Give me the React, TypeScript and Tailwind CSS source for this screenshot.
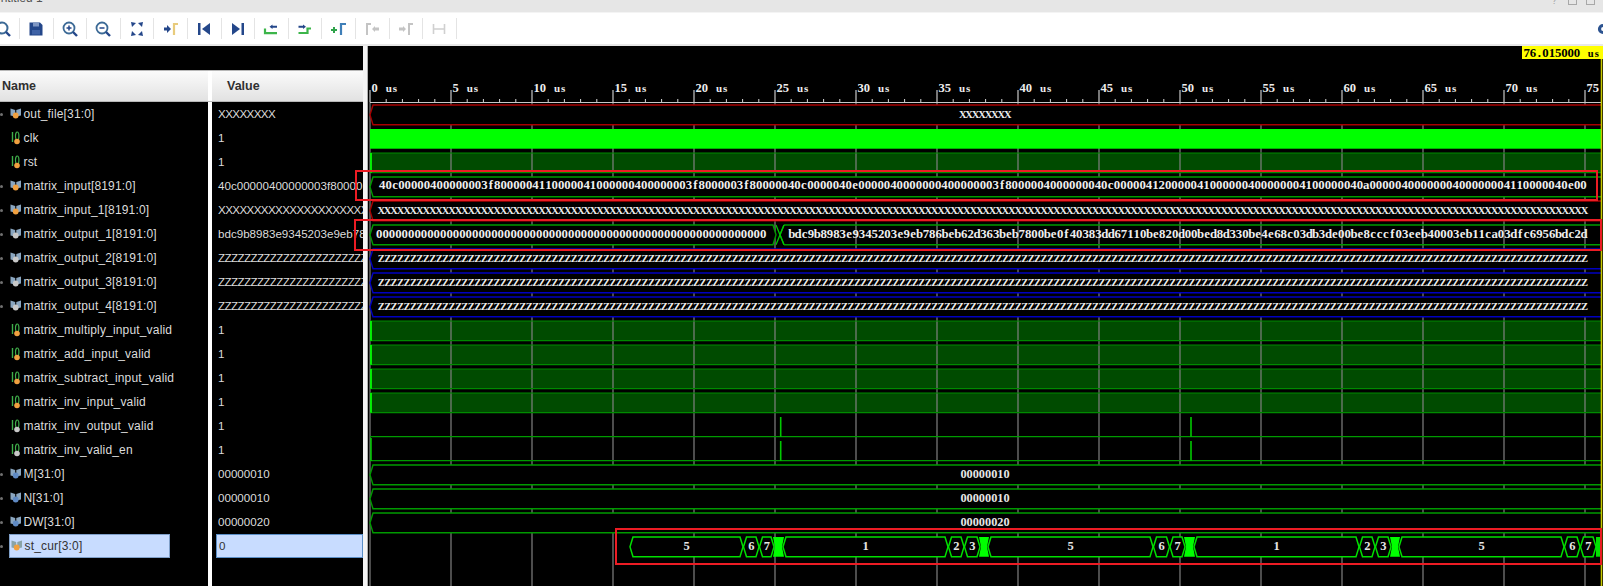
import React from "react";

const NAVY = "#24478a";
const STEEL = "#3c6a96";

function Ic({ children }: { children: React.ReactNode }) {
  return (
    <svg width="20" height="20" viewBox="0 0 20 20" fill="none">
      {children}
    </svg>
  );
}

const toolbarIcons: React.ReactNode[] = [
  <Ic><circle cx="9" cy="9" r="5.5" stroke={STEEL} strokeWidth="2" /><path d="M13 13l4 4" stroke={NAVY} strokeWidth="2.4" /></Ic>,
  <Ic><path d="M3.5 3.5h10.500l2.500 2.500v10.500H3.500z" fill={NAVY} /><rect x="7" y="3.500" width="6" height="4" fill="#7f97c4" /><rect x="6" y="11" width="8" height="4.500" fill="#3f62a6" /></Ic>,
  <Ic><circle cx="9" cy="9" r="5.500" stroke={STEEL} strokeWidth="1.800" /><path d="M6.500 9h5M9 6.500v5" stroke={NAVY} strokeWidth="1.500" /><path d="M13 13l4 4" stroke={NAVY} strokeWidth="2.400" /></Ic>,
  <Ic><circle cx="9" cy="9" r="5.500" stroke={STEEL} strokeWidth="1.800" /><path d="M6.500 9h5" stroke={NAVY} strokeWidth="1.500" /><path d="M13 13l4 4" stroke={NAVY} strokeWidth="2.400" /></Ic>,
  <Ic><path d="M4 3l5 1-4 4zM16 3l-5 1 4 4zM4 17l5-1-4-4zM16 17l-5-1 4-4z" fill={NAVY} /></Ic>,
  <Ic><path d="M3 8.500h3V6l4 4-4 4v-2.500H3z" fill={NAVY} /><path d="M13 16V5h4" stroke="#e8cb7c" strokeWidth="2.200" /></Ic>,
  <Ic><rect x="4" y="4" width="2.500" height="12" fill={NAVY} /><path d="M16 4v12L8 10z" fill={NAVY} /></Ic>,
  <Ic><rect x="13.500" y="4" width="2.500" height="12" fill={NAVY} /><path d="M4 4v12l8-6z" fill={NAVY} /></Ic>,
  <Ic><path d="M4 9.500v4.700h12" stroke="#3cb54a" strokeWidth="2.200" /><path d="M8.500 7.700 11.500 5.500v1.300H16v2h-4.500V10z" fill={NAVY} /></Ic>,
  <Ic><path d="M3.500 14h9V9.500H16" stroke="#3cb54a" strokeWidth="2.200" /><path d="M11 7.700 8 5.500v1.300H3.500v2H8V10z" fill={NAVY} /></Ic>,
  <Ic><path d="M2 11h6M5 8v6" stroke="#2ea34a" strokeWidth="2" /><path d="M12 16V5h5" stroke="#3f7fb8" strokeWidth="2.200" /></Ic>,
  <Ic><path d="M5 16V5h4" stroke="#c4c4c4" strokeWidth="2" /><path d="M17 8.500h-4V7l-3 3 3 3v-1.500h4z" fill="#c4c4c4" /></Ic>,
  <Ic><path d="M3 8.500h4V7l3 3-3 3v-1.500H3z" fill="#c4c4c4" /><path d="M13 16V5h4" stroke="#c4c4c4" strokeWidth="2" /></Ic>,
  <Ic><path d="M4.500 5v10M15.500 5v10M5 10h10" stroke="#d0d0d0" strokeWidth="1.600" /></Ic>,
];

const ORANGE = "#f0a040";
const GRAY = "#c8c8c8";

function BusIcon({ dot, body = "#8aa6c0" }: { dot: string; body?: string }) {
  return (
    <svg width="12" height="14" viewBox="0 0 12 14" className="shrink-0">
      <path d="M0.500 1.500 5.200 3v6.500L0.500 8.500zM11 1.500 6.300 3v6.500L11 8.500z" fill={body} />
      <circle cx="5.700" cy="8.500" r="2.900" fill={dot} />
    </svg>
  );
}

function BitIcon({ dot }: { dot: string }) {
  return (
    <svg width="12" height="16" viewBox="0 0 12 16" className="shrink-0">
      <path d="M2.500 2v10" stroke="#3fae4a" strokeWidth="1.400" />
      <ellipse cx="7.200" cy="6" rx="1.700" ry="4" stroke="#3fae4a" strokeWidth="1.200" fill="none" />
      <circle cx="7" cy="11.500" r="2.800" fill={dot} />
    </svg>
  );
}

type Row = {
  name: string;
  value: string;
  bus: boolean;
  dot: string;
  body?: string;
  squeeze?: boolean;
  selected?: boolean;
};

const X21 = "X".repeat(21);
const Z23 = "Z".repeat(23);
const BLUE = "#5f8ac4";

const rows: Row[] = [
  { name: "out_file[31:0]", value: "XXXXXXXX", bus: true, dot: ORANGE, squeeze: true },
  { name: "clk", value: "1", bus: false, dot: ORANGE },
  { name: "rst", value: "1", bus: false, dot: ORANGE },
  { name: "matrix_input[8191:0]", value: "40c00000400000003f80000", bus: true, dot: ORANGE },
  { name: "matrix_input_1[8191:0]", value: X21, bus: true, dot: ORANGE, squeeze: true },
  { name: "matrix_output_1[8191:0]", value: "bdc9b8983e9345203e9eb78", bus: true, dot: GRAY },
  { name: "matrix_output_2[8191:0]", value: Z23, bus: true, dot: GRAY, squeeze: true },
  { name: "matrix_output_3[8191:0]", value: Z23, bus: true, dot: GRAY, squeeze: true },
  { name: "matrix_output_4[8191:0]", value: Z23, bus: true, dot: GRAY, squeeze: true },
  { name: "matrix_multiply_input_valid", value: "1", bus: false, dot: ORANGE },
  { name: "matrix_add_input_valid", value: "1", bus: false, dot: ORANGE },
  { name: "matrix_subtract_input_valid", value: "1", bus: false, dot: ORANGE },
  { name: "matrix_inv_input_valid", value: "1", bus: false, dot: ORANGE },
  { name: "matrix_inv_output_valid", value: "1", bus: false, dot: GRAY },
  { name: "matrix_inv_valid_en", value: "1", bus: false, dot: GRAY },
  { name: "M[31:0]", value: "00000010", bus: true, dot: BLUE },
  { name: "N[31:0]", value: "00000010", bus: true, dot: BLUE },
  { name: "DW[31:0]", value: "00000020", bus: true, dot: BLUE },
  { name: "st_cur[3:0]", value: "0", bus: true, dot: ORANGE, selected: true },
];

/* ---------- waveform drawing (page coordinates through the viewBox) ---------- */
const tx = (t: number) => 370 + 16.2 * t;
const top = (i: number) => 105 + 24 * i;
const bot = (i: number) => 124.7 + 24 * i;
const mid = (i: number) => 114.85 + 24 * i;
const END = 1601;
const SERIF = "'Liberation Serif', serif";

const glyphWidth: Record<string, number> = {
  a: 0.5,
  b: 0.556,
  c: 0.444,
  d: 0.556,
  e: 0.444,
  f: 0.333,
  u: 0.556,
  s: 0.389,
  X: 0.722,
  Z: 0.667,
  ".": 0.25,
};

function Mono({
  s,
  x,
  y,
  pitch = 6.39,
  size = 12.8,
  fill = "#eeeeee",
}: {
  s: string;
  x: number;
  y: number;
  pitch?: number;
  size?: number;
  fill?: string;
}) {
  const xs = Array.from(s, (c, k) => {
    const w = (glyphWidth[c] ?? 0.5) * size;
    return (x + k * pitch + (pitch - w) / 2).toFixed(2);
  }).join(" ");
  return (
    <text x={xs} y={y} fontFamily={SERIF} fontWeight="700" fontSize={size} fill={fill}>
      {s}
    </text>
  );
}

function Center({ s, x, y, size = 12 }: { s: string; x: number; y: number; size?: number }) {
  return (
    <text x={x} y={y} textAnchor="middle" fontFamily={SERIF} fontWeight="700" fontSize={size} fill="#e6e6e6">
      {s}
    </text>
  );
}

function Band({
  i,
  x1 = 370,
  x2 = END,
  color,
  open = true,
  w = 1.4,
}: {
  i: number;
  x1?: number;
  x2?: number;
  color: string;
  open?: boolean;
  w?: number;
}) {
  const t = top(i);
  const b = bot(i);
  const m = (t + b) / 2;
  const d = open
    ? `M${x2} ${t}H${x1 + 3}L${x1} ${m}L${x1 + 3} ${b}H${x2}`
    : `M${x1 + 3} ${t}H${x2 - 3}L${x2} ${m}L${x2 - 3} ${b}H${x1 + 3}L${x1} ${m}Z`;
  return <path d={d} fill="#000" stroke={color} strokeWidth={w} />;
}

function DarkBit({ i }: { i: number }) {
  return <rect x={370} y={top(i)} width={END - 370} height={bot(i) - top(i)} fill="#004b00" />;
}
function DarkBitLines({ i }: { i: number }) {
  return (
    <g>
      <path d={`M370 ${top(i)}H${END}M370 ${bot(i)}H${END}`} stroke="#008a00" strokeWidth="1.200" />
      <path d={`M371 ${top(i)}V${bot(i)}`} stroke="#00ff00" strokeWidth="1.800" />
    </g>
  );
}

const W = "#00e000";
type Seg = { a: number; b: number; v: string };
const segs: Seg[] = [
  { a: 630, b: 743, v: "5" },
  { a: 743.5, b: 759, v: "6" },
  { a: 759.5, b: 774, v: "7" },
  { a: 783, b: 948, v: "1" },
  { a: 948.5, b: 964, v: "2" },
  { a: 964.5, b: 980, v: "3" },
  { a: 988, b: 1153, v: "5" },
  { a: 1153.5, b: 1169.5, v: "6" },
  { a: 1170, b: 1185, v: "7" },
  { a: 1194, b: 1359, v: "1" },
  { a: 1359.5, b: 1375, v: "2" },
  { a: 1375.5, b: 1391, v: "3" },
  { a: 1399, b: 1564, v: "5" },
  { a: 1564.5, b: 1580, v: "6" },
  { a: 1580.5, b: 1596, v: "7" },
];

const INPUT = [
  "40c00000", "40000000", "3f800000", "41100000", "41000000", "40000000",
  "3f800000", "3f800000", "40c00000", "40e00000", "40000000", "40000000",
  "3f800000", "40000000", "40c00000", "41200000", "41000000", "40000000",
  "41000000", "40a00000", "40000000", "40000000", "41100000", "40e00",
].join("");
const OUTPUT =
  "bdc9b8983e9345203e9eb786beb62d363beb7800be0f40383dd67110be820d00bed8d330be4e68c03db3de00be8cccf03eeb40003eb11ca03dfc6956bdc2d";

function Wave() {
  const majors = Array.from({ length: 16 }, (_, k) => k * 5);
  const minors = Array.from({ length: 76 }, (_, k) => k).filter((k) => k % 5 !== 0);
  return (
    <svg width="1235" height="540" viewBox="368 46 1235 540" className="block">
      <rect x="368" y="46" width="1235" height="540" fill="#000" />
      {[2, 9, 10, 11, 12].map((i) => (
        <DarkBit key={i} i={i} />
      ))}
      {majors.map((t) => (
        <path key={t} d={`M${tx(t)} 102V586`} stroke="#808080" strokeWidth="1.200" />
      ))}

      {/* ruler */}
      <path d={`M370 102.500H${END}`} stroke="#c8c8c8" strokeWidth="1.200" />
      {majors.map((t) => (
        <path key={t} d={`M${tx(t)} 90V102`} stroke="#c8c8c8" strokeWidth="1.200" />
      ))}
      {minors.map((t) => (
        <path key={t} d={`M${tx(t)} 99V102`} stroke="#d8d8d8" strokeWidth="1" />
      ))}
      {majors.map((t) => {
        const label = String(t);
        const x = tx(t) + 1.5;
        const after = x + label.length * 6.2 + 8;
        if (t === 75) return <Mono key={t} s={label} x={x} y={92} pitch={6.2} size={12.5} />;
        return (
          <g key={t}>
            <Mono s={label} x={x} y={92} pitch={6.2} size={12.5} />
            <Mono s="us" x={after} y={92} pitch={6.2} size={11} />
          </g>
        );
      })}

      {/* one-bit rows */}
      <rect x={370} y={top(1)} width={END - 370} height={bot(1) - top(1)} fill="#00ff00" />
      {[2, 9, 10, 11, 12].map((i) => (
        <DarkBitLines key={i} i={i} />
      ))}
      <path d={`M370 ${bot(13)}H${END}M370 ${bot(14)}H${END}`} stroke="#009a00" strokeWidth="1.200" />
      <path d={`M371 ${top(14) - 3}V${bot(14)}`} stroke="#00e000" strokeWidth="1.400" />
      {[780.7, 1191].map((x) => (
        <g key={x}>
          <path d={`M${x} ${top(13)}V${bot(13)}M${x} ${top(14)}V${bot(14)}`} stroke="#00c800" strokeWidth="1.600" />
        </g>
      ))}

      {/* bus rows */}
      <Band i={0} color="#a80000" />
      <Mono s="XXXXXXXX" x={959.5} y={mid(0) + 3} size={10.5} pitch={6.435} />
      <Band i={3} color="#009a00" />
      <Mono s={INPUT} x={379} y={mid(3) + 2.6} />
      <Band i={4} color="#a80000" />
      <Mono s={"X".repeat(188)} x={378} y={mid(4) + 3.3} size={10.5} pitch={6.435} />
      <Band i={5} x2={776} color="#009a00" open={false} />
      <path d={`M784 ${top(5)}H${END}M784 ${bot(5)}H${END}M784 ${top(5)}L780 ${mid(5)}L784 ${bot(5)}`} stroke="#009a00" strokeWidth="1.400" fill="none" />
      <path d={`M776 ${top(5)}L784 ${bot(5)}M784 ${top(5)}L776 ${bot(5)}`} stroke="#00c800" strokeWidth="1.300" />
      <Mono s={"0".repeat(61)} x={376} y={mid(5) + 3} pitch={6.4} />
      <Mono s={OUTPUT} x={788.5} y={mid(5) + 3} />
      {[6, 7, 8].map((i) => (
        <g key={i}>
          <Band i={i} color="#0000c0" />
          <Mono s={"Z".repeat(188)} x={378} y={mid(i) + 3.3} size={10.5} pitch={6.435} />
        </g>
      ))}
      {[
        [15, "00000010"],
        [16, "00000010"],
        [17, "00000020"],
      ].map(([i, v]) => (
        <g key={i as number}>
          <Band i={i as number} color="#009a00" />
          <Center s={v as string} x={985} y={mid(i as number) + 2.8} size={12.3} />
        </g>
      ))}

      {/* st_cur */}
      {segs.map((s, k) => (
        <g key={k}>
          <Band i={18} x1={s.a} x2={s.b} color={W} open={false} w={1.5} />
          <Center s={s.v} x={(s.a + s.b) / 2} y={mid(18) + 2.8} size={12.5} />
        </g>
      ))}
      {[
        [774, 783],
        [980, 988],
        [1185, 1194],
        [1391, 1399],
      ].map(([a, b]) => (
        <path
          key={a}
          d={`M${a - 1} ${top(18)}H${b + 1}L${b - 1} ${mid(18)}L${b + 1} ${bot(18)}H${a - 1}L${a + 1} ${mid(18)}Z`}
          fill="#00ff00"
        />
      ))}
      <rect x={1596} y={top(18)} width={4} height={bot(18) - top(18)} fill="#00e000" />

      {/* cursor */}
      <path d="M1601.5 58V586" stroke="#c8c800" strokeWidth="1.600" />
      <rect x="1522" y="46" width="81" height="13" fill="#ffff00" />
      <Mono s="76.015000" x={1523.5} y={57} pitch={6.3} size={12.8} fill="#000" />
      <Mono s="us" x={1587.5} y={57} pitch={6.2} size={10.5} fill="#000" />
    </svg>
  );
}

function RedBox({ className }: { className: string }) {
  return <div className={`absolute border-2 border-[#ec1c24] ${className}`} />;
}

export default function App() {
  return (
    <div className="relative flex h-[586px] w-[1603px] flex-col overflow-hidden bg-white font-['Liberation_Sans',sans-serif]">
      <div className="relative flex h-[12px] shrink-0 items-start justify-between overflow-hidden bg-[#e6e6e6]">
        <span className="ml-[-8px] mt-[-9px] text-[12px] leading-[14px] text-[#555555]">Untitled 1</span>
        <div className="mr-[8px] mt-[-4px] flex items-center gap-[9px] text-[10px] leading-[10px] text-[#a8a8a8]">
          <span className="mr-[2px]">?</span>
          <div className="h-[8px] w-[9px] border border-[#a8a8a8]" />
          <div className="h-[8px] w-[9px] border border-[#a8a8a8]" />
        </div>
      </div>
      <div className="h-[1px] shrink-0 bg-[#f4f4f4]" />
      <div className="flex h-[31px] shrink-0 items-center justify-between overflow-hidden bg-white">
        <div className="ml-[-13.6px] flex h-[21px] items-center">
          {toolbarIcons.map((icon, k) => (
            <div key={k} className="flex h-full w-[33.6px] items-center justify-center border-r border-[#e4e4e4]">
              {icon}
            </div>
          ))}
        </div>
        <svg width="6" height="14" viewBox="0 0 6 14" className="shrink-0">
          <circle cx="6" cy="7" r="3.500" fill="none" stroke="#2c5390" strokeWidth="3.200" />
        </svg>
      </div>
      <div className="h-[2px] shrink-0 bg-[#e8e8e8]" />

      <div className="flex min-h-0 flex-1">
        <div className="flex w-[363px] shrink-0 flex-col bg-black">
          <div className="h-[24px] shrink-0 bg-black" />
          <div className="flex h-[32px] shrink-0 border-y border-[#b8b8b8] bg-linear-to-b from-[#fbfbfb] to-[#e2e2e2] text-[12.5px] font-bold text-[#303030]">
            <div className="flex w-[208px] items-center pl-[2px]">Name</div>
            <div className="w-[4px] bg-white" />
            <div className="flex flex-1 items-center pl-[15px]">Value</div>
          </div>
          <div className="flex min-h-0 flex-1 text-[#dcdcdc]">
            <div className="w-[208px] shrink-0 overflow-hidden text-[12px] tracking-[0.17px]">
              {rows.map((r) => (
                <div key={r.name} className="relative flex h-[24px] items-center">
                  {r.bus && <div className="absolute left-0 h-[3px] w-[3px] rounded-full bg-[#707070]" />}
                  <div
                    className={`ml-[9px] flex h-[24px] items-center gap-[1.5px] pl-[1px] ${
                      r.selected ? "w-[161px] border border-[#7f9fc8] bg-[#c8dcff] text-[#333333]" : ""
                    }`}
                  >
                    {r.bus ? <BusIcon dot={r.dot} body={r.selected ? "#8aa4a8" : r.body} /> : <BitIcon dot={r.dot} />}
                    <span className="whitespace-nowrap">{r.name}</span>
                  </div>
                </div>
              ))}
            </div>
            <div className="w-[4px] shrink-0 bg-white" />
            <div className="min-w-0 flex-1 overflow-hidden text-[11.6px]">
              {rows.map((r) => (
                <div
                  key={r.name}
                  className={`flex h-[24px] items-center overflow-hidden whitespace-nowrap pl-[6px] ${
                    r.selected ? "ml-[4px] border border-[#5b8fc7] bg-[#c8dcff] !pl-[2px] text-[#333333]" : ""
                  } ${r.squeeze ? "tracking-[-0.6px]" : ""}`}
                >
                  {r.value}
                </div>
              ))}
            </div>
          </div>
        </div>
        <div className="w-[5px] shrink-0 border-r border-[#b0b0b0] bg-[#f4f4f4]" />
        <div className="min-w-0 flex-1">
          <Wave />
        </div>
      </div>

      <RedBox className="left-[355px] top-[170px] h-[31px] w-[1243px]" />
      <RedBox className="left-[354px] top-[219px] h-[32px] w-[1248px]" />
      <RedBox className="left-[615px] top-[528px] h-[37px] w-[987px]" />
    </div>
  );
}
